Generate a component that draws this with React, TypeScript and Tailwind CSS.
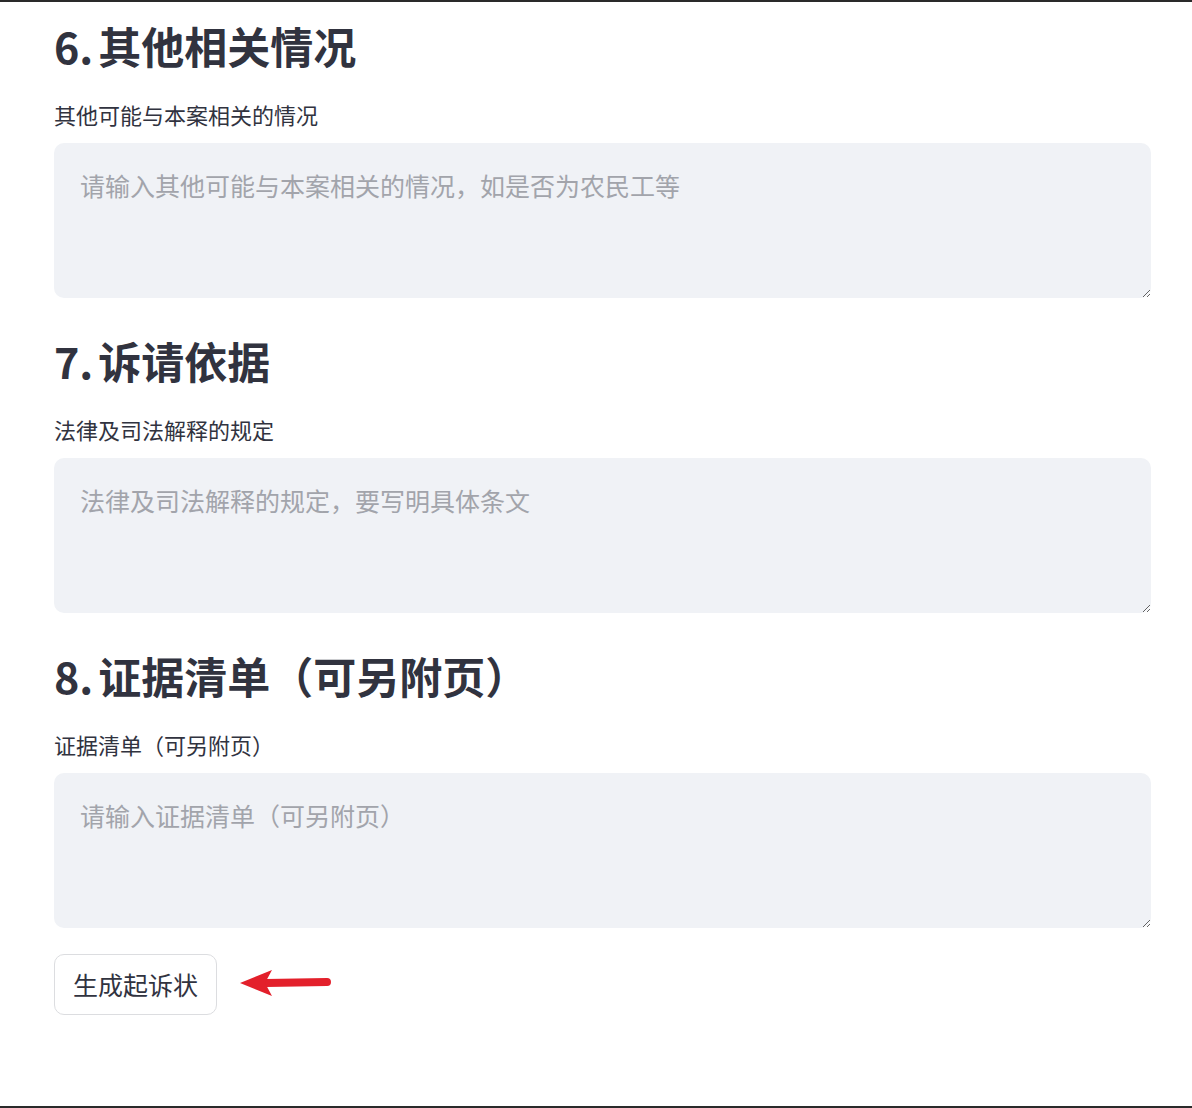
const sections = [
  {
    num: '6.',
    title: '其他相关情况',
    label: '其他可能与本案相关的情况',
    placeholder: '请输入其他可能与本案相关的情况，如是否为农民工等',
  },
  {
    num: '7.',
    title: '诉请依据',
    label: '法律及司法解释的规定',
    placeholder: '法律及司法解释的规定，要写明具体条文',
  },
  {
    num: '8.',
    title: '证据清单（可另附页）',
    label: '证据清单（可另附页）',
    placeholder: '请输入证据清单（可另附页）',
  },
]

const font = { fontFamily: '"Noto Sans CJK SC", "Noto Sans", sans-serif' }

const RedArrow = () => (
  <svg width="100" height="32" viewBox="0 0 100 32" className="ml-[19px] -mt-[4px]">
    <line x1="30" y1="16" x2="91" y2="15" stroke="#e3202b" strokeWidth="8" strokeLinecap="round" />
    <path d="M4 16 L36 3 L29 16 L36 29 Z" fill="#e3202b" />
  </svg>
)

export default function App() {
  return (
    <div
      className="w-[1192px] h-[1108px] bg-white border-t-2 border-b-2 border-[#2a2a2a] text-[#31333f] overflow-hidden"
      style={font}
    >
      <div className="ml-[54px] w-[1097px] pt-[15px]">
        {sections.map((s, i) => (
          <div key={s.num} className={i === 0 ? '' : 'mt-[34px]'}>
            <h2 className="text-[43px] leading-[56px] font-bold flex">
              <span className="font-semibold">{s.num}</span>
              <span className="ml-[5px]">{s.title}</span>
            </h2>
            <label className="block mt-[25px] text-[22px] leading-[32px]">{s.label}</label>
            <textarea
              placeholder={s.placeholder}
              className="block mt-[13px] w-full h-[155px] rounded-[10px] bg-[#f0f2f6] px-[26px] pt-[24px] text-[25px] leading-[37px] placeholder:text-[#a2a4ab] outline-none resize-y"
            />
          </div>
        ))}
        <div className="flex items-center mt-[26px]">
          <button className="h-[61px] w-[163px] rounded-[10px] border border-[#dcdde0] bg-white text-[25px] text-[#31333f]">
            生成起诉状
          </button>
          <RedArrow />
        </div>
      </div>
    </div>
  )
}
